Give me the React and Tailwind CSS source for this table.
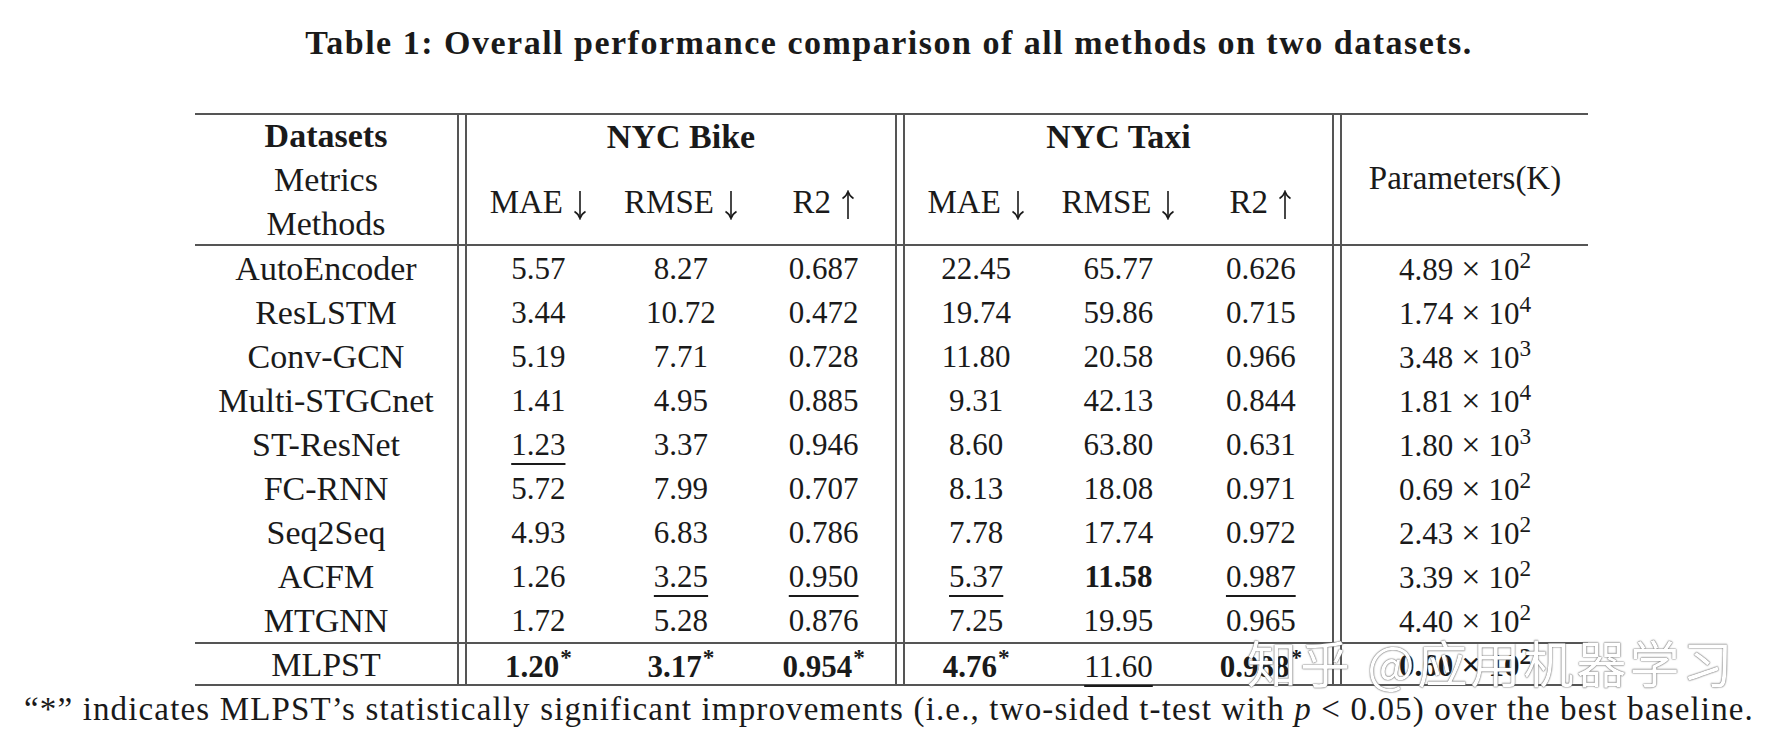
import clsx from "clsx";

const rows = [
  { name: "AutoEncoder", bike: ["5.57", "8.27", "0.687"], taxi: ["22.45", "65.77", "0.626"], p: ["4.89", "2"] },
  { name: "ResLSTM", bike: ["3.44", "10.72", "0.472"], taxi: ["19.74", "59.86", "0.715"], p: ["1.74", "4"] },
  { name: "Conv-GCN", bike: ["5.19", "7.71", "0.728"], taxi: ["11.80", "20.58", "0.966"], p: ["3.48", "3"] },
  { name: "Multi-STGCnet", bike: ["1.41", "4.95", "0.885"], taxi: ["9.31", "42.13", "0.844"], p: ["1.81", "4"] },
  { name: "ST-ResNet", bike: ["_1.23", "3.37", "0.946"], taxi: ["8.60", "63.80", "0.631"], p: ["1.80", "3"] },
  { name: "FC-RNN", bike: ["5.72", "7.99", "0.707"], taxi: ["8.13", "18.08", "0.971"], p: ["0.69", "2"] },
  { name: "Seq2Seq", bike: ["4.93", "6.83", "0.786"], taxi: ["7.78", "17.74", "0.972"], p: ["2.43", "2"] },
  { name: "ACFM", bike: ["1.26", "_3.25", "_0.950"], taxi: ["_5.37", "!11.58", "_0.987"], p: ["3.39", "2"] },
  { name: "MTGNN", bike: ["1.72", "5.28", "0.876"], taxi: ["7.25", "19.95", "0.965"], p: ["4.40", "2"] },
];

const best = { name: "MLPST", bike: ["!1.20*", "!3.17*", "!0.954*"], taxi: ["!4.76*", "_11.60", "!0.988*"], p: ["0.60", "2"] };

// "!" bold, "_" underline, trailing "*" significance star
function Val({ v }) {
  let bold = false;
  let under = false;
  let star = false;
  if (v.startsWith("!")) { bold = true; v = v.slice(1); }
  if (v.startsWith("_")) { under = true; v = v.slice(1); }
  if (v.endsWith("*")) { star = true; v = v.slice(0, -1); }
  return (
    <span className={clsx(bold && "font-bold", under && "underline decoration-2 underline-offset-[8px]")}>
      {v}
      {star && <sup className="ml-[1px]">*</sup>}
    </span>
  );
}

const Sep = () => <div className="w-[10px] shrink-0 self-stretch border-x-2 border-[#555]" />;

// tall math-style arrow
const Arrow = ({ up }) => (
  <svg
    width="14"
    height="30"
    viewBox="0 0 14 30"
    fill="none"
    stroke="currentColor"
    strokeWidth="1.6"
    className={clsx("ml-[10px] inline-block align-[-7px]", up && "rotate-180")}
  >
    <path d="M7 1V28" />
    <path d="M1.5 21.5C4 23 6 25.5 7 28.5C8 25.5 10 23 12.5 21.5" />
  </svg>
);

function Params({ p, bold }) {
  return (
    <span className={clsx(bold && "font-bold")}>
      {p[0]}
      <span className="mx-[8px] text-[34px]">×</span>
      10<sup>{p[1]}</sup>
    </span>
  );
}

function Row({ r, bold, className }) {
  return (
    <div className={clsx("flex items-stretch", className)}>
      <div className="flex w-[262px] items-center justify-center text-[34px]">{r.name}</div>
      <Sep />
      <div className="grid w-[428px] grid-cols-3 items-center text-center text-[31px]">
        {r.bike.map((v, i) => <Val key={i} v={v} />)}
      </div>
      <Sep />
      <div className="grid w-[427px] grid-cols-3 items-center text-center text-[31px]">
        {r.taxi.map((v, i) => <Val key={i} v={v} />)}
      </div>
      <Sep />
      <div className="flex flex-1 items-center justify-center text-[31px]">
        <Params p={r.p} bold={bold} />
      </div>
    </div>
  );
}

function Metrics() {
  return (
    <div className="grid flex-1 grid-cols-3 items-center text-center text-[33px]">
      <span>MAE<Arrow /></span>
      <span>RMSE<Arrow /></span>
      <span>R2<Arrow up /></span>
    </div>
  );
}

export default function App() {
  return (
    <div className="relative h-[738px] w-[1778px] overflow-hidden bg-white font-['Liberation_Serif',serif] text-[#1a1a1a]">
      <h1 className="pt-[21px] text-center text-[34px] font-bold leading-[44px] tracking-[1.5px]">
        Table 1: Overall performance comparison of all methods on two datasets.
      </h1>

      <div className="ml-[195px] mt-[48px] w-[1393px]">
        {/* header */}
        <div className="flex h-[133px] items-stretch border-y-2 border-[#555] leading-[44px]">
          <div className="flex w-[262px] flex-col items-center justify-center text-[34px]">
            <span className="font-bold">Datasets</span>
            <span>Metrics</span>
            <span>Methods</span>
          </div>
          <Sep />
          <div className="flex w-[428px] flex-col">
            <div className="h-[44px] text-center text-[34px] font-bold">NYC Bike</div>
            <Metrics />
          </div>
          <Sep />
          <div className="flex w-[427px] flex-col">
            <div className="h-[44px] text-center text-[34px] font-bold">NYC Taxi</div>
            <Metrics />
          </div>
          <Sep />
          <div className="flex flex-1 items-center justify-center pb-[4px] text-[33px]">Parameters(K)</div>
        </div>

        {/* body */}
        {rows.map((r) => (
          <Row key={r.name} r={r} className="h-[44px]" />
        ))}
        <Row r={best} bold className="h-[44px] border-y-2 border-[#555]" />
      </div>

      <p className="mt-[1px] text-center text-[33px] leading-[44px] tracking-[1.15px]">
        “*” indicates MLPST’s statistically significant improvements (i.e., two-sided t-test with <i>p</i> &lt; 0.05) over the best baseline.
      </p>

      {/* watermark */}
      <div className="absolute left-[1247px] top-[636px] font-['Noto_Sans_CJK_SC',sans-serif] text-[50px] leading-none tracking-[3px] text-white [text-shadow:0_0_1px_#444,0_0_2px_#777]">
        知乎 @应用机器学习
      </div>
    </div>
  );
}
